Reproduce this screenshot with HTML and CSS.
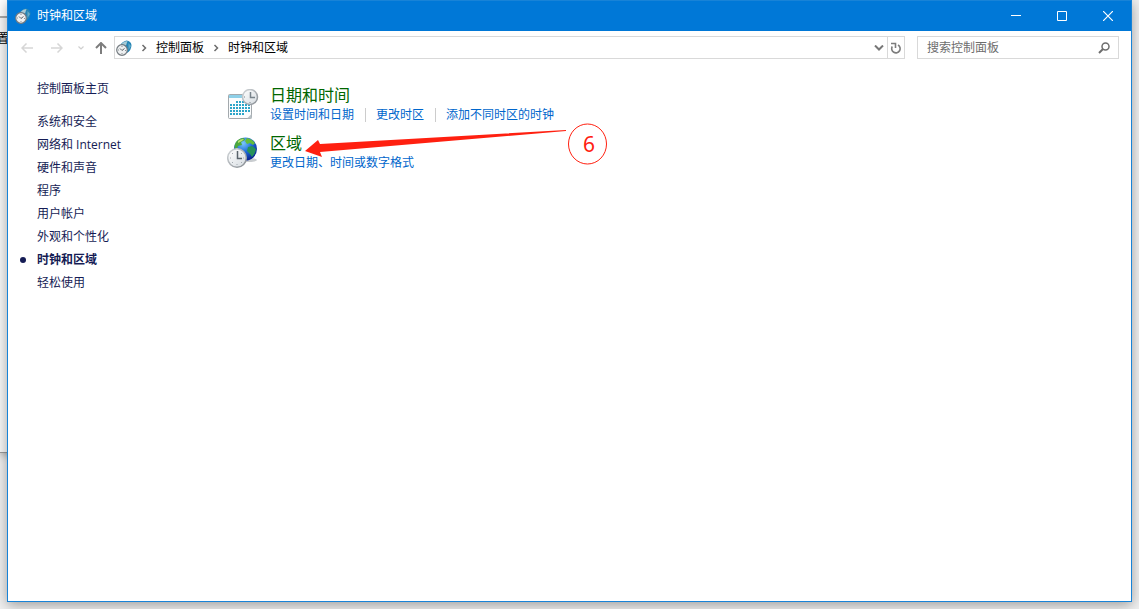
FILE: index.html
```html
<!DOCTYPE html>
<html lang="zh-CN">
<head>
  <meta charset="UTF-8">
  <meta name="viewport" content="width=device-width, initial-scale=1">
  <title>时钟和区域</title>
  <link rel="stylesheet" href="styles.css">
</head>
<body>

  <!-- Shared icon shapes -->
  <svg class="defs" width="0" height="0" aria-hidden="true">
    <defs>
      <radialGradient id="globe" cx="40%" cy="25%" r="75%">
        <stop offset="0" stop-color="#7cc8fa"/>
        <stop offset="0.5" stop-color="#1f6edb"/>
        <stop offset="1" stop-color="#0a2590"/>
      </radialGradient>
      <linearGradient id="face" x1="0" y1="0" x2="1" y2="1">
        <stop offset="0" stop-color="#ffffff"/>
        <stop offset="1" stop-color="#d5dbe0"/>
      </linearGradient>
      <linearGradient id="rim" x1="0" y1="0" x2="1" y2="1">
        <stop offset="0" stop-color="#d4d8db"/>
        <stop offset="1" stop-color="#858b91"/>
      </linearGradient>
      <symbol id="clock-globe" viewBox="0 0 16 16">
        <path d="M4.500 5Q6 1.500 10.500 .5Q15 1 15.500 5Q15.500 10 11 13Z" fill="#2585b5"/>
        <path d="M5.500 4Q8 1 11.500 1L10 5.500Z" fill="#a9cbd6"/>
        <path d="M12.500 3L15 6L12.500 10Z" fill="#65abc8"/>
        <circle cx="6" cy="10" r="5.300" fill="#eef0f1" stroke="#747b80" stroke-width="1.200"/>
        <path d="M6 10.500L4 8.500M6 10.500L8.500 8.500" stroke="#5b6267" fill="none"/>
        <path d="M6 6v1M6 13v1M2 10h1M9 10.500h1" stroke="#8a9195" fill="none"/>
      </symbol>
      <symbol id="crumb" viewBox="0 0 6 8">
        <path d="M1.500 1L4.500 4L1.500 7" fill="none" stroke="#6d6d6d" stroke-width="1.500"/>
      </symbol>
    </defs>
  </svg>

  <!-- Edge of the window behind -->
  <div class="behind" aria-hidden="true">
    <div class="behind-title"></div>
    <span class="behind-text">置</span>
  </div>

  <div class="window">
    <header class="titlebar">
      <svg class="app-icon"><use href="#clock-globe"/></svg>
      <h1>时钟和区域</h1>
      <button type="button" aria-label="最小化">
        <svg width="10" height="10"><path d="M0 4.500H10" stroke="#fff"/></svg>
      </button>
      <button type="button" aria-label="最大化">
        <svg width="10" height="10"><path d="M.5 .5H9.500V9.500H.5Z" fill="none" stroke="#fff"/></svg>
      </button>
      <button type="button" aria-label="关闭">
        <svg width="10" height="10"><path d="M0 0L10 10M10 0L0 10" stroke="#fff" stroke-width="1.200"/></svg>
      </button>
    </header>

    <div class="toolbar">
      <div class="history">
        <button type="button" aria-label="后退" disabled>
          <svg width="12" height="10"><path d="M12 5H1M5.500 .5L1 5L5.500 9.500" fill="none" stroke="#d6d6d6" stroke-width="1.500"/></svg>
        </button>
        <button type="button" aria-label="前进" disabled>
          <svg width="12" height="10"><path d="M0 5H11M6.500 .5L11 5L6.500 9.500" fill="none" stroke="#d6d6d6" stroke-width="1.500"/></svg>
        </button>
        <button type="button" class="recent" aria-label="最近的位置" disabled>
          <svg width="6" height="4"><path d="M.5 .5L3 3L5.500 .5" fill="none" stroke="#cfcfcf" stroke-width="1.200"/></svg>
        </button>
        <button type="button" class="up" aria-label="向上">
          <svg width="12" height="12"><path d="M6 12V1.500M1 6L6 1L11 6" fill="none" stroke="#7d7d7d" stroke-width="2"/></svg>
        </button>
      </div>

      <div class="address">
        <svg class="app-icon"><use href="#clock-globe"/></svg>
        <svg class="crumb-arrow"><use href="#crumb"/></svg>
        <a href="#">控制面板</a>
        <svg class="crumb-arrow"><use href="#crumb"/></svg>
        <a href="#">时钟和区域</a>
        <button type="button" class="drop" aria-label="以前的位置">
          <svg width="10" height="6"><path d="M1 .5L5 4.500L9 .5" fill="none" stroke="#777" stroke-width="2"/></svg>
        </button>
        <button type="button" class="refresh" aria-label="刷新">
          <svg width="12" height="12"><path d="M2.300 4.500A4.200 4.200 0 1 0 8 3" fill="none" stroke="#7d7d7d" stroke-width="1.600"/><path d="M1 1.500H5.500V6" fill="none" stroke="#7d7d7d" stroke-width="1.600"/></svg>
        </button>
      </div>

      <div class="search">
        <input type="text" placeholder="搜索控制面板" aria-label="搜索控制面板">
        <button type="button" aria-label="搜索">
          <svg width="12" height="12"><circle cx="7.500" cy="4.500" r="3.500" fill="none" stroke="#6d6d6d" stroke-width="1.500"/><path d="M5 7L1 11" stroke="#6d6d6d" stroke-width="2"/></svg>
        </button>
      </div>
    </div>

    <div class="content">
      <nav class="sidebar">
        <a class="home" href="#">控制面板主页</a>
        <ul>
          <li><a href="#">系统和安全</a></li>
          <li><a href="#">网络和 Internet</a></li>
          <li><a href="#">硬件和声音</a></li>
          <li><a href="#">程序</a></li>
          <li><a href="#">用户帐户</a></li>
          <li><a href="#">外观和个性化</a></li>
          <li class="current"><a href="#" aria-current="page">时钟和区域</a></li>
          <li><a href="#">轻松使用</a></li>
        </ul>
      </nav>

      <main class="categories">
        <section class="category">
          <svg class="category-icon" viewBox="0 0 32 32">
            <rect x="1.500" y="5.500" width="23" height="24" rx="1" fill="#fafcfd" stroke="#a3a9ad"/>
            <rect x="2" y="6" width="22" height="3" fill="#8ed0e8"/>
            <path d="M9 13H24" stroke="#2ba5c9" stroke-width="2" stroke-dasharray="2 1"/>
            <path d="M3 16H24M3 19H24M3 22H24" stroke="#2ba5c9" stroke-width="2" stroke-dasharray="2 1"/>
            <path d="M3 25H17" stroke="#2ba5c9" stroke-width="2" stroke-dasharray="2 1"/>
            <path d="M20 29.500L24.500 25V29.500Z" fill="#b8c0c5"/>
            <circle cx="23" cy="8" r="7.500" fill="url(#face)" stroke="url(#rim)" stroke-width="1.500"/>
            <path d="M23.500 3V8.500H28" fill="none" stroke="#78838b" stroke-width="1.500"/>
            <path d="M17 8h1M23 13v1" stroke="#7b858c"/>
          </svg>
          <div>
            <h2><a href="#">日期和时间</a></h2>
            <ul class="tasks">
              <li><a href="#">设置时间和日期</a></li>
              <li><a href="#">更改时区</a></li>
              <li><a href="#">添加不同时区的时钟</a></li>
            </ul>
          </div>
        </section>

        <section class="category">
          <svg class="category-icon" viewBox="0 0 32 32">
            <ellipse cx="21" cy="23" rx="9" ry="2" fill="#c9cdd0"/>
            <circle cx="18.500" cy="12" r="11.500" fill="url(#globe)"/>
            <path d="M9 5Q12 1 17 1L18 3L14 5L15 8L11 9L10 12L7.500 11Q7.500 7 9 5Z" fill="#4da83c"/>
            <path d="M20 1Q25 2 28 6L26 8L23 6L20 7L18 4Z" fill="#63bd3c"/>
            <path d="M21 10L25 9L29 12Q28 17 25 20L23 17L20 14Z" fill="#27935a"/>
            <path d="M11 4Q14 1.500 17 2L15 4L11 6Z" fill="#b8df71"/>
            <circle cx="10" cy="21" r="9.300" fill="url(#face)" stroke="url(#rim)" stroke-width="1.500"/>
            <path d="M10.500 14V21.500H15" fill="none" stroke="#59636b" stroke-width="1.500"/>
            <path d="M3 21h1M10 27v1M16 21h1M5 16l1 1M5 26l1-1M15 26l-1-1M15 16l-1 1" stroke="#a2aab0"/>
          </svg>
          <div>
            <h2><a href="#">区域</a></h2>
            <ul class="tasks">
              <li><a href="#">更改日期、时间或数字格式</a></li>
            </ul>
          </div>
        </section>

        <!-- Step marker drawn over the page -->
        <svg class="marker" width="304" height="44" viewBox="0 0 304 44" role="img" aria-label="步骤 6">
          <path d="M1 27L14 16L16 20L262 6V7L16 28L18 33Z" fill="#ff2010"/>
          <ellipse cx="283.500" cy="20" rx="19" ry="20" fill="none" stroke="#ff2010"/>
          <text x="285" y="28" text-anchor="middle">6</text>
        </svg>
      </main>
    </div>
  </div>

</body>
</html>
```
FILE: styles.css
```css
* { box-sizing: border-box; margin: 0; padding: 0; }

body {
  min-height: 100vh;
  display: flex;
  padding: 0 7px 7px;
  background: #f0f0f0;
  font-family: "Open Sans", "Noto Sans CJK SC", sans-serif;
  font-size: 12px;
  line-height: 18px;
  overflow: hidden;
}

a { color: inherit; text-decoration: none; }
ul { list-style: none; }
svg { display: block; flex: none; }
button {
  display: flex;
  align-items: center;
  justify-content: center;
  border: none;
  background: none;
}

.defs { position: absolute; }

/* Window behind */
.behind {
  position: absolute;
  top: 0;
  left: 0;
  width: 40px;
  height: 453px;
  background: #f8f8f8;
  border-bottom: 1px solid #999;
  box-shadow: 0 2px 8px rgba(0,0,0,0.3);
}
.behind-title {
  height: 18px;
  background: #fff;
  border-bottom: 2px solid #aaa;
}
.behind-text {
  position: absolute;
  top: 30px;
  right: 31px;
  color: #000;
}

/* Main window */
.window {
  position: relative;
  flex: 1;
  display: flex;
  flex-direction: column;
  min-width: 0;
  border: 1px solid #1883d7;
  background: #fff;
  box-shadow: 0 3px 12px rgba(0,0,0,0.35);
}

.titlebar {
  display: flex;
  height: 30px;
  align-items: center;
  padding-left: 7px;
  background: #0078d7;
  color: #fff;
}
.titlebar h1 {
  flex: 1;
  margin-left: 6px;
  font-size: 12px;
  font-weight: normal;
}
.titlebar button { width: 46px; height: 30px; }
.app-icon { width: 16px; height: 16px; }

/* Toolbar */
.toolbar {
  display: flex;
  align-items: center;
  padding: 5px 12px 0 4px;
}
.history { display: flex; width: 102px; }
.history button { width: 30px; height: 23px; }
.history .recent { width: 18px; }
.history .up { width: 22px; }

.address {
  flex: 1;
  display: flex;
  align-items: center;
  height: 23px;
  padding-left: 1px;
  border: 1px solid #d9d9d9;
}
.crumb-arrow { width: 6px; height: 8px; margin: 0 9px; }
.drop { width: 16px; height: 21px; margin-left: auto; }
.refresh {
  width: 17px;
  height: 21px;
  border-left: 1px solid #d9d9d9;
}

.search {
  display: flex;
  width: 202px;
  height: 23px;
  margin-left: 12px;
  border: 1px solid #d9d9d9;
}
.search input {
  flex: 1;
  min-width: 0;
  padding-left: 9px;
  border: none;
  outline: none;
  background: none;
  font: inherit;
}
.search input::placeholder { color: #6d6d6d; }
.search button { width: 28px; }

/* Content */
.content { display: flex; flex: 1; }

.sidebar {
  width: 219px;
  padding: 21px 0 0 29px;
  color: #151c55;
}
.home { display: block; margin-bottom: 12px; }
.sidebar li { line-height: 23px; }
.current {
  display: flex;
  align-items: center;
  margin-left: -17px;
  font-weight: bold;
}
.current::before {
  content: "";
  width: 6px;
  height: 6px;
  margin-right: 11px;
  border-radius: 50%;
  background: #151c55;
}

.categories {
  position: relative;
  flex: 1;
  padding-top: 26px;
}
.category {
  display: flex;
  height: 48px;
  gap: 11px;
}
.category-icon { width: 32px; height: 32px; margin-top: 4px; }
.category h2 {
  font-size: 16px;
  font-weight: normal;
  line-height: 21px;
  color: #060;
}
.tasks { display: flex; color: #06c; }
.tasks li { display: flex; align-items: center; }
.tasks li + li::before {
  content: "";
  width: 1px;
  height: 14px;
  margin: 0 10px 0 11px;
  background: #ccc;
}

.marker {
  position: absolute;
  top: 65px;
  left: 77px;
  overflow: visible;
  pointer-events: none;
}
.marker text {
  font-family: "Noto Sans", sans-serif;
  font-size: 21px;
  fill: #ff2010;
}
```
